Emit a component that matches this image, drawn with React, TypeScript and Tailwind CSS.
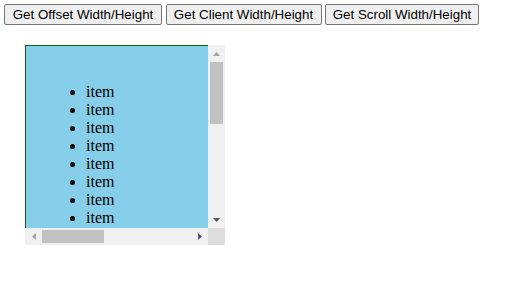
const buttons = [
  { label: "Get Offset Width/Height", w: "w-[158px]" },
  { label: "Get Client Width/Height", w: "w-[156px]" },
  { label: "Get Scroll Width/Height", w: "w-[154px]" },
];

function ArrowUp() {
  return (
    <svg width="7" height="4" viewBox="0 0 7 4">
      <path d="M0 4 L3.5 0 L7 4 Z" fill="#a3a3a3" />
    </svg>
  );
}

export default function App() {
  return (
    <div className="w-[515px] h-[292px] bg-white px-1 pt-1" style={{ fontFamily: '"Liberation Serif", serif' }}>
      {/* Buttons */}
      <div className="flex gap-[3.5px]">
        {buttons.map((b) => (
          <button
            key={b.label}
            className={`${b.w} h-[21px] px-0 border border-[#767676] rounded-[2px] bg-[#efefef] text-[13.33px] leading-[15px] text-black whitespace-nowrap`}
            style={{ fontFamily: '"Liberation Sans", Arial, sans-serif' }}
          >
            {b.label}
          </button>
        ))}
      </div>

      {/* Scroll box */}
      <div className="ml-[21px] mt-[20px] w-[200px] h-[200px] grid grid-cols-[183px_17px] grid-rows-[183px_17px]">
        <div className="overflow-hidden">
          <div className="w-[440px] h-[440px] bg-[#87ceeb] border-l border-t border-[#0a640a] p-5">
            <ul className="list-disc pl-10 mt-[17px] mb-4 text-[16px] leading-[18px] text-black">
              {Array.from({ length: 8 }).map((_, i) => (
                <li key={i}>item</li>
              ))}
            </ul>
          </div>
        </div>

        {/* vertical scrollbar */}
        <div className="bg-[#f0f0f0] flex flex-col">
          <div className="h-[17px] flex items-center justify-center">
            <ArrowUp />
          </div>
          <div className="flex-1 px-[2px]">
            <div className="h-[62px] bg-[#c1c1c1]" />
          </div>
          <div className="h-[17px] flex items-center justify-center">
            <svg width="7" height="4" viewBox="0 0 7 4">
              <path d="M0 0 L7 0 L3.5 4 Z" fill="#505566" />
            </svg>
          </div>
        </div>

        {/* horizontal scrollbar */}
        <div className="bg-[#f0f0f0] flex">
          <div className="w-[17px] flex items-center justify-center">
            <svg width="4" height="7" viewBox="0 0 4 7">
              <path d="M4 0 L4 7 L0 3.5 Z" fill="#a3a3a3" />
            </svg>
          </div>
          <div className="flex-1 py-[2px]">
            <div className="w-[62px] h-full bg-[#c1c1c1]" />
          </div>
          <div className="w-[17px] flex items-center justify-center">
            <svg width="4" height="7" viewBox="0 0 4 7">
              <path d="M0 0 L4 3.5 L0 7 Z" fill="#505566" />
            </svg>
          </div>
        </div>
        <div className="bg-[#dcdcdc]" />
      </div>
    </div>
  );
}
